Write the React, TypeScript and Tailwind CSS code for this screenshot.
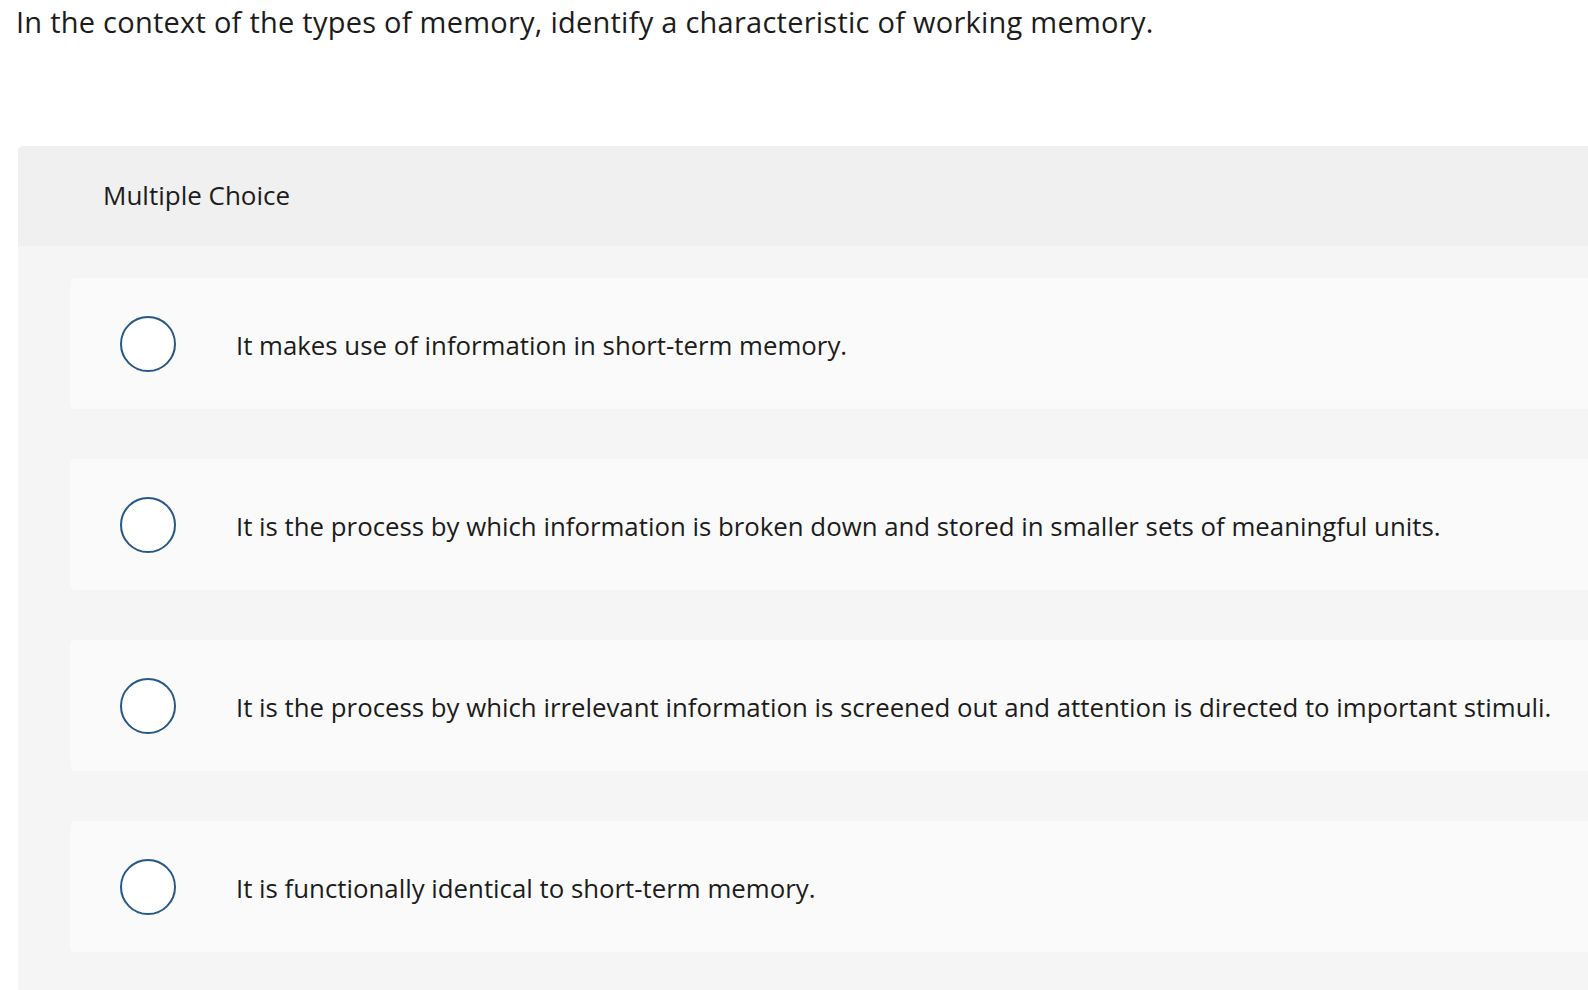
const options = [
  "It makes use of information in short-term memory.",
  "It is the process by which information is broken down and stored in smaller sets of meaningful units.",
  "It is the process by which irrelevant information is screened out and attention is directed to important stimuli.",
  "It is functionally identical to short-term memory.",
];

function Radio() {
  return (
    <div className="h-[56px] w-[56px] shrink-0 rounded-full border-2 border-[#255887] bg-white" />
  );
}

export default function App() {
  return (
    <div className="h-[990px] w-full overflow-hidden bg-white font-['Open_Sans',sans-serif] text-[#1c1c1c]">
      <h1 className="pl-[16px] pt-[4px] text-[29px] leading-[36px] tracking-[0.25px]">
        In the context of the types of memory, identify a characteristic of working memory.
      </h1>

      <section className="ml-[18px] mt-[106px] w-[1640px] rounded-t-[5px] bg-[#f5f5f5]">
        <div className="flex h-[100px] items-center rounded-t-[5px] bg-[#f0f0f0] pl-[85px]">
          <span className="pb-[2px] text-[26px]">Multiple Choice</span>
        </div>

        <div className="flex flex-col gap-[50px] pl-[52px] pt-[32px] pb-[60px]">
          {options.map((o) => (
            <label
              key={o}
              className="flex h-[131px] items-center rounded-[5px] bg-[#fafafa] pl-[50px]"
            >
              <Radio />
              <span className="pl-[60px] pt-[3px] text-[25.8px]">{o}</span>
            </label>
          ))}
        </div>
      </section>
    </div>
  );
}
